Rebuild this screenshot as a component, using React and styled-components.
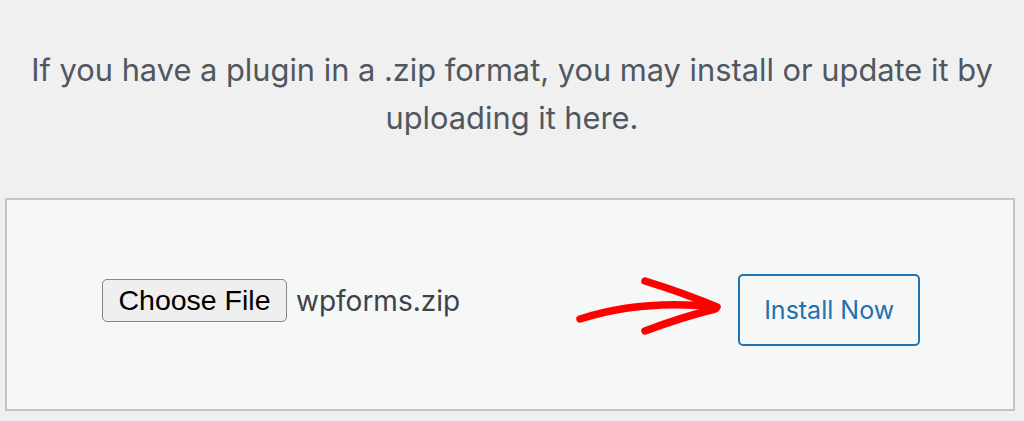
import React from 'react'
import styled, { createGlobalStyle } from 'styled-components'

const GlobalStyle = createGlobalStyle`
  html, body {
    margin: 0;
    padding: 0;
    background: #f0f0f1;
  }
  body {
    font-family: Inter, "Noto Sans", sans-serif;
  }
`

const Page = styled.div`
  width: 1024px;
  height: 421px;
  overflow: hidden;
`

const Description = styled.p`
  margin: 0;
  padding: 46px 20px 0;
  height: 198px;
  box-sizing: border-box;
  text-align: center;
  font-size: 30.8px;
  line-height: 48px;
  color: #50575e;
`

const Panel = styled.div`
  margin-left: 5px;
  width: 1010px;
  height: 213px;
  box-sizing: border-box;
  border: 2px solid #c3c4c7;
  background: #f6f7f7;
  display: flex;
  align-items: flex-start;
  padding: 74px 0 0 95px;
`

const FileGroup = styled.div`
  display: flex;
  align-items: center;
  gap: 9px;
  margin-top: 5px;
`

const ChooseButton = styled.button`
  width: 185px;
  height: 43px;
  box-sizing: border-box;
  padding: 0;
  border: 1.5px solid #858585;
  border-radius: 5px;
  background: #efefef;
  font-family: "Liberation Sans", Arial, sans-serif;
  font-size: 28.5px;
  color: #000;
`

const FileName = styled.span`
  font-size: 28px;
  color: #3c434a;
`

const Arrow = styled.svg`
  flex: none;
  margin: 1px 0 0 114px;
`

const InstallButton = styled.button`
  width: 182px;
  height: 72px;
  box-sizing: border-box;
  margin-left: 14px;
  border: 2px solid #2271b1;
  border-radius: 5px;
  background: #f6f7f7;
  color: #2271b1;
  font-family: Inter, "Noto Sans", sans-serif;
  font-size: 25px;
  padding: 0;
`

const App = () => {
  return (
    <Page>
      <GlobalStyle />
      <Description>
        If you have a plugin in a .zip format, you may install or update it by uploading it here.
      </Description>
      <Panel>
        <FileGroup>
          <ChooseButton>Choose File</ChooseButton>
          <FileName>wpforms.zip</FileName>
        </FileGroup>
        <Arrow width="150" height="62" viewBox="572 274 150 62">
          <g fill="none" stroke="#ff0000" strokeWidth="7.5" strokeLinecap="round" strokeLinejoin="round">
            <path d="M578 318 Q640 298 714 306" />
            <path d="M643 280 Q682 292 715 306" />
            <path d="M643 330 Q680 316 713 308" />
          </g>
        </Arrow>
        <InstallButton>Install Now</InstallButton>
      </Panel>
    </Page>
  )
}

export default App
